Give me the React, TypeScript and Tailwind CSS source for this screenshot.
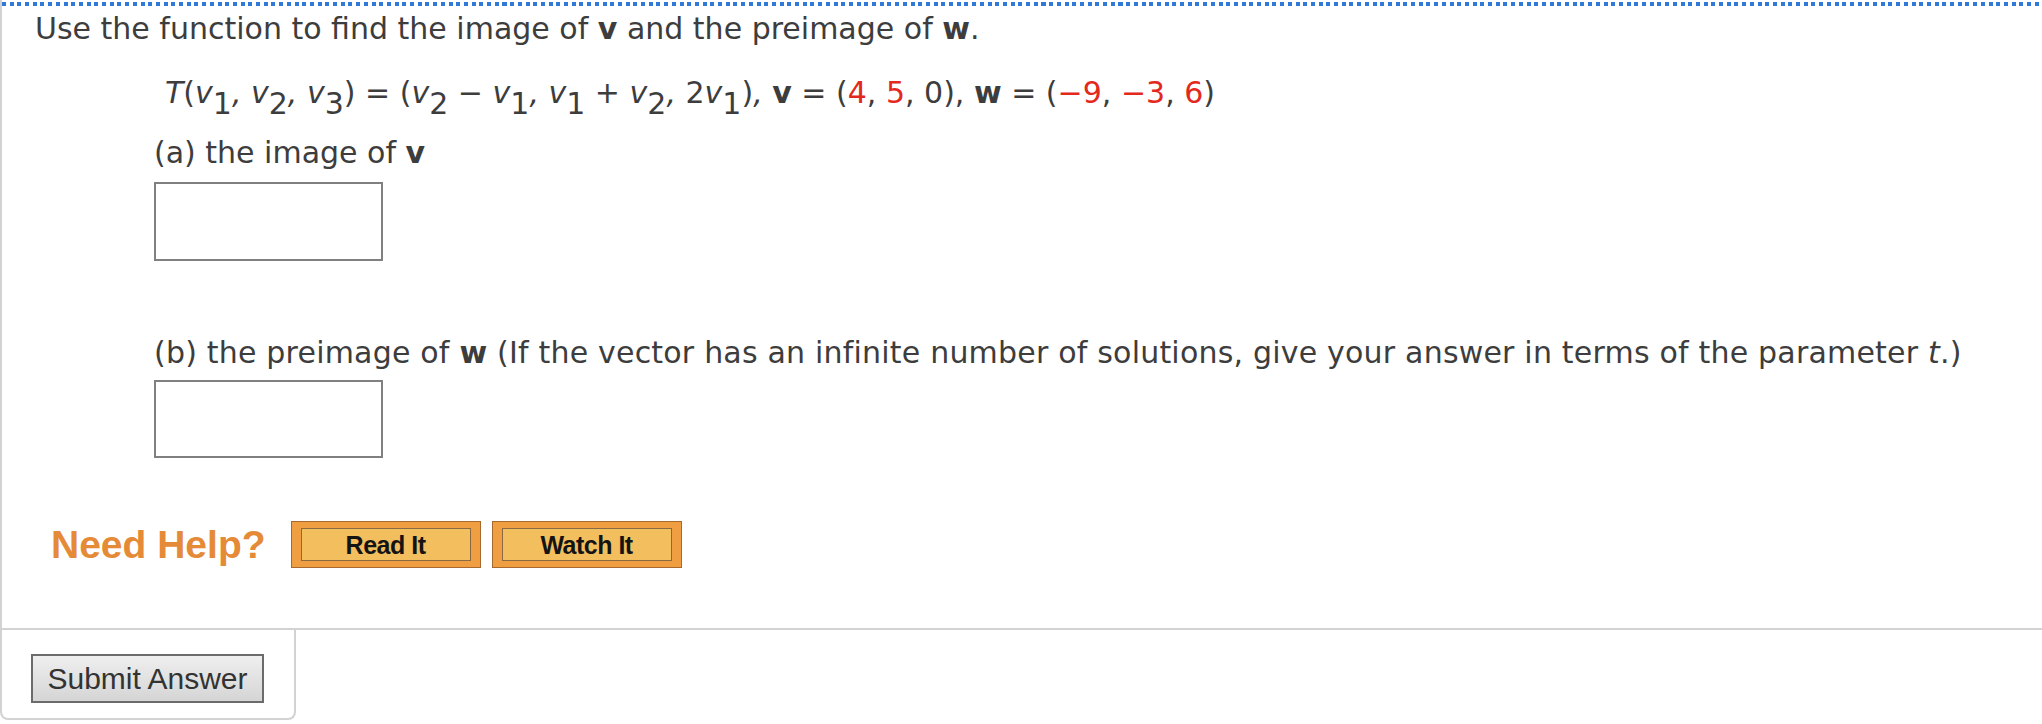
import React from "react";

const Sub = ({ children }: { children: React.ReactNode }) => (
  <span className="relative top-[11px] not-italic">{children}</span>
);

const V = ({ n }: { n: string }) => (
  <>
    <i>v</i>
    <Sub>{n}</Sub>
  </>
);

const Red = ({ children }: { children: React.ReactNode }) => (
  <span className="text-[#e3281e]">{children}</span>
);

function HelpButton({ label }: { label: string }) {
  return (
    <button className="h-[47px] w-[190px] border border-[#a8692e] bg-[#ef9f42] px-[9px] py-[6px]">
      <span className="flex h-full w-full items-center justify-center border border-[#8a6a45] bg-[#f3bf5e] font-['Liberation_Sans',Arial,sans-serif] text-[25px] font-bold tracking-[-0.5px] text-[#141414]">
        {label}
      </span>
    </button>
  );
}

export default function App() {
  return (
    <div className="h-[724px] w-full bg-white font-['DejaVu_Sans',Verdana,sans-serif] text-[30px] leading-[34px] text-[#3d3d3d]">
      {/* question panel */}
      <div className="flex h-[630px] flex-col border-b-2 border-l-2 border-[#d2d2d2] pt-[2px]">
        <div className="h-[4px] w-full bg-[image:repeating-linear-gradient(90deg,#3079d6_0px,#3079d6_4px,transparent_4px,transparent_7.7px)]" />

        <p className="mt-[6px] h-[34px] pl-[33px]">
          Use the function to find the image of <b>v</b> and the preimage of <b>w</b>.
        </p>

        <p className="mt-[30px] h-[34px] whitespace-nowrap pl-[163px]">
          <i>T</i>(<V n="1" />
          <i>,</i> <V n="2" />
          <i>,</i> <V n="3" />) = (<V n="2" /> − <V n="1" />
          <i>,</i> <V n="1" /> + <V n="2" />
          <i>,</i> 2<V n="1" />)<i>,</i> <b>v</b> = (<Red>4</Red>, <Red>5</Red>, 0), <b>w</b> = (
          <Red>−9</Red>, <Red>−3</Red>, <Red>6</Red>)
        </p>

        <div className="flex flex-col pl-[152px]">
          <p className="mt-[26px] h-[34px]">
            (a) the image of <b>v</b>
          </p>
          <div className="mt-[12px] h-[79px] w-[229px] border-2 border-[#808080] bg-white" />

          <p className="mt-[75px] h-[34px] whitespace-nowrap tracking-[0.2px]">
            (b) the preimage of <b>w</b> (If the vector has an infinite number of solutions, give your answer in
            terms of the parameter <i>t</i>.)
          </p>
          <div className="mt-[10px] h-[78px] w-[229px] border-2 border-[#808080] bg-white" />
        </div>

        <div className="mt-[63px] flex items-center pl-[49px]">
          <span className="mr-[25px] font-['Liberation_Sans',Arial,sans-serif] text-[39px] font-bold leading-none text-[#e58a36]">
            Need Help?
          </span>
          <div className="flex gap-[11px]">
            <HelpButton label="Read It" />
            <HelpButton label="Watch It" />
          </div>
        </div>
      </div>

      {/* submit area */}
      <div className="h-[90px] w-[296px] rounded-b-[8px] border-x-2 border-b-2 border-[#d2d2d2] pl-[29px] pt-[24px]">
        <button className="h-[49px] w-[233px] border-2 border-[#6b6b6b] bg-gradient-to-b from-[#efefef] to-[#d5d5d5] font-['Liberation_Sans',Arial,sans-serif] text-[30px] leading-none text-[#333]">
          Submit Answer
        </button>
      </div>
    </div>
  );
}
